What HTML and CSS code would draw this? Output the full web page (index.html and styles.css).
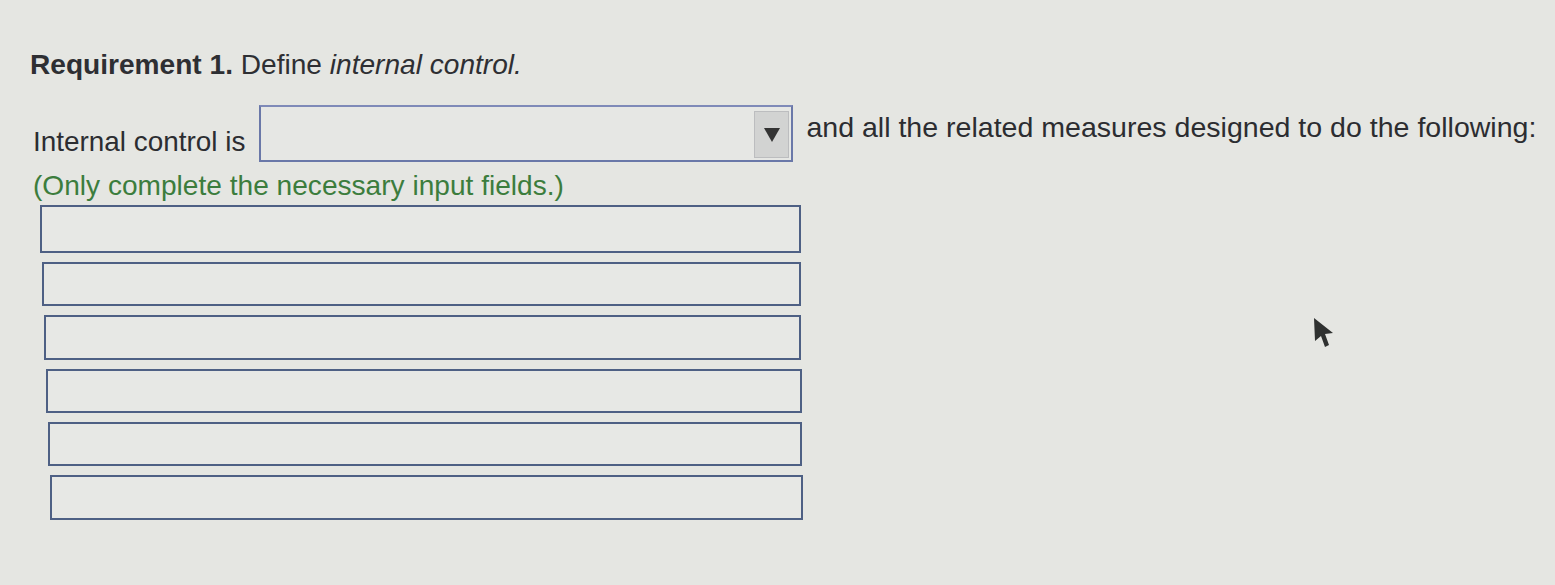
FILE: index.html
```html
<!DOCTYPE html>
<html>
<head>
<meta charset="utf-8">
<link rel="stylesheet" href="styles.css">
</head>
<body>
<div class="page">
  <h1 class="title"><b>Requirement 1.</b> Define <i>internal control.</i></h1>
  <div class="row">
    <span class="lead">Internal control is</span>
    <div class="select">
      <div class="select-btn">
        <svg width="18" height="16" viewBox="0 0 18 16"><path d="M1 1 L17 1 L9 15 Z" fill="#333"/></svg>
      </div>
    </div>
    <span class="tail">and all the related measures designed to do the following:</span>
  </div>
  <p class="note">(Only complete the necessary input fields.)</p>
  <div class="fields">
    <div class="field f1"></div>
    <div class="field f2"></div>
    <div class="field f3"></div>
    <div class="field f4"></div>
    <div class="field f5"></div>
    <div class="field f6"></div>
  </div>
</div>
<svg class="cursor" width="24" height="34" viewBox="0 0 24 34"><path d="M2 2 L21 17 L13 18 L17 29 L13 31 L9 20 L3 25 Z" fill="#2f3130"/></svg>
</body>
</html>
```
FILE: styles.css
```css
html, body {
  margin: 0;
  padding: 0;
  background: #e5e6e2;
  width: 1555px;
  height: 585px;
  overflow: hidden;
  position: relative;
  font-family: "Liberation Sans", Arial, sans-serif;
  color: #2c2d31;
}
.page {
  padding: 47px 0 0 30px;
  display: flex;
  flex-direction: column;
}
.title {
  margin: 0;
  font-size: 28.1px;
  font-weight: normal;
  line-height: 36px;
  color: #2e2f33;
}
.title b { font-weight: bold; }
.row {
  display: flex;
  align-items: center;
  margin-top: 22px;
  margin-left: 3px;
}
.lead {
  font-size: 27.9px;
  margin-top: 17px;
}
.select {
  width: 534px;
  height: 57px;
  margin-left: 14px;
  border: 2px solid #6a78a8;
  border-top-color: #7f8ab8;
  background: #e6e7e4;
  display: flex;
  justify-content: flex-end;
  align-items: center;
  padding-right: 2px;
  box-sizing: border-box;
}
.select-btn {
  width: 33px;
  height: 45px;
  background: #d2d3d2;
  border: 1px solid #bcbdbf;
  display: flex;
  align-items: center;
  justify-content: center;
  margin-top: 2px;
}
.tail {
  font-size: 28.55px;
  margin-left: 13px;
  margin-bottom: 12px;
}
.note {
  margin: 8px 0 0 3px;
  font-size: 28.1px;
  line-height: 32px;
  color: #3c7d3d;
}
.fields {
  display: flex;
  flex-direction: column;
  gap: 9px;
  margin-top: 3px;
}
.field {
  height: 45px;
  border: 2px solid #4e6084;
  background: #e7e8e5;
  box-sizing: border-box;
}
.f1 { margin-left: 10px; width: 761px; height: 48px; }
.f2 { margin-left: 12px; width: 759px; height: 44px; }
.f3 { margin-left: 14px; width: 757px; }
.f4 { margin-left: 16px; width: 756px; height: 44px; }
.f5 { margin-left: 18px; width: 754px; height: 44px; }
.f6 { margin-left: 20px; width: 753px; }
.cursor {
  position: absolute;
  left: 1312px;
  top: 316px;
}
```
